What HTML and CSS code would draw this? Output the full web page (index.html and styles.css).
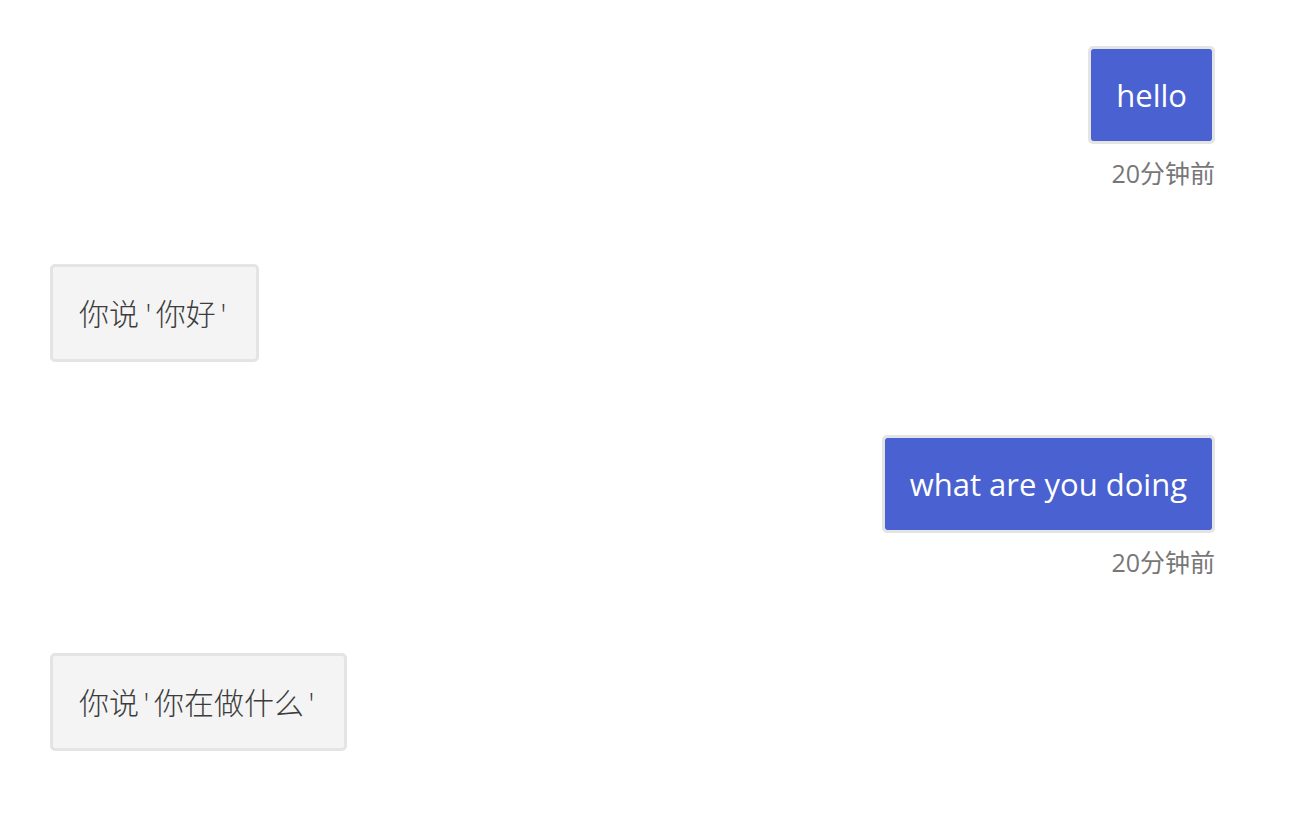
FILE: index.html
```html
<!DOCTYPE html>
<html>
<head>
    <title>聊天</title>
    <link rel="stylesheet" href="styles.css">
</head>
<body>
    <div class="chat">
        <!-- 我发出的消息 -->
        <div class="msg mine">
            <div class="bubble">hello</div>
            <div class="time">20分钟前</div>
        </div>

        <!-- 对方的回复 -->
        <div class="msg theirs">
            <div class="bubble">你说 <span class="q">'</span>你好<span class="q">'</span></div>
        </div>

        <div class="msg mine">
            <div class="bubble">what are you doing</div>
            <div class="time">20分钟前</div>
        </div>

        <div class="msg theirs">
            <div class="bubble">你说<span class="q">'</span>你在做什么<span class="q">'</span></div>
        </div>
    </div>
</body>
</html>
```

FILE: styles.css
```css
body { margin: 0; background: #fff; font-family: "Open Sans", "Noto Sans CJK SC", sans-serif; }
.chat { padding: 46px 76px 10px 50px; display: flex; flex-direction: column; }
.msg { display: flex; flex-direction: column; }
.msg.mine { align-items: flex-end; margin-bottom: 74px; }
.msg.theirs { align-items: flex-start; margin-bottom: 73px; }
.msg:last-child { margin-bottom: 0; }
.bubble {
    padding: 26px 25px 25px;
    font-size: 31px;
    line-height: 41px;
    border: 3px solid #e4e4e4;
    border-radius: 5px;
}
.mine .bubble { background: #4a61d1; color: #fff; background-clip: padding-box; }
.theirs .bubble {
    background: #f4f4f4;
    color: #3c3c3c;
    font-size: 30px;
    font-weight: 300;
    word-spacing: -6px;
    padding: 26px 25px 25px 26px;
}
.q { display: inline-block; width: 15px; text-align: center; }
.time { margin-top: 12px; font-size: 25px; line-height: 34px; color: #777; }
```
